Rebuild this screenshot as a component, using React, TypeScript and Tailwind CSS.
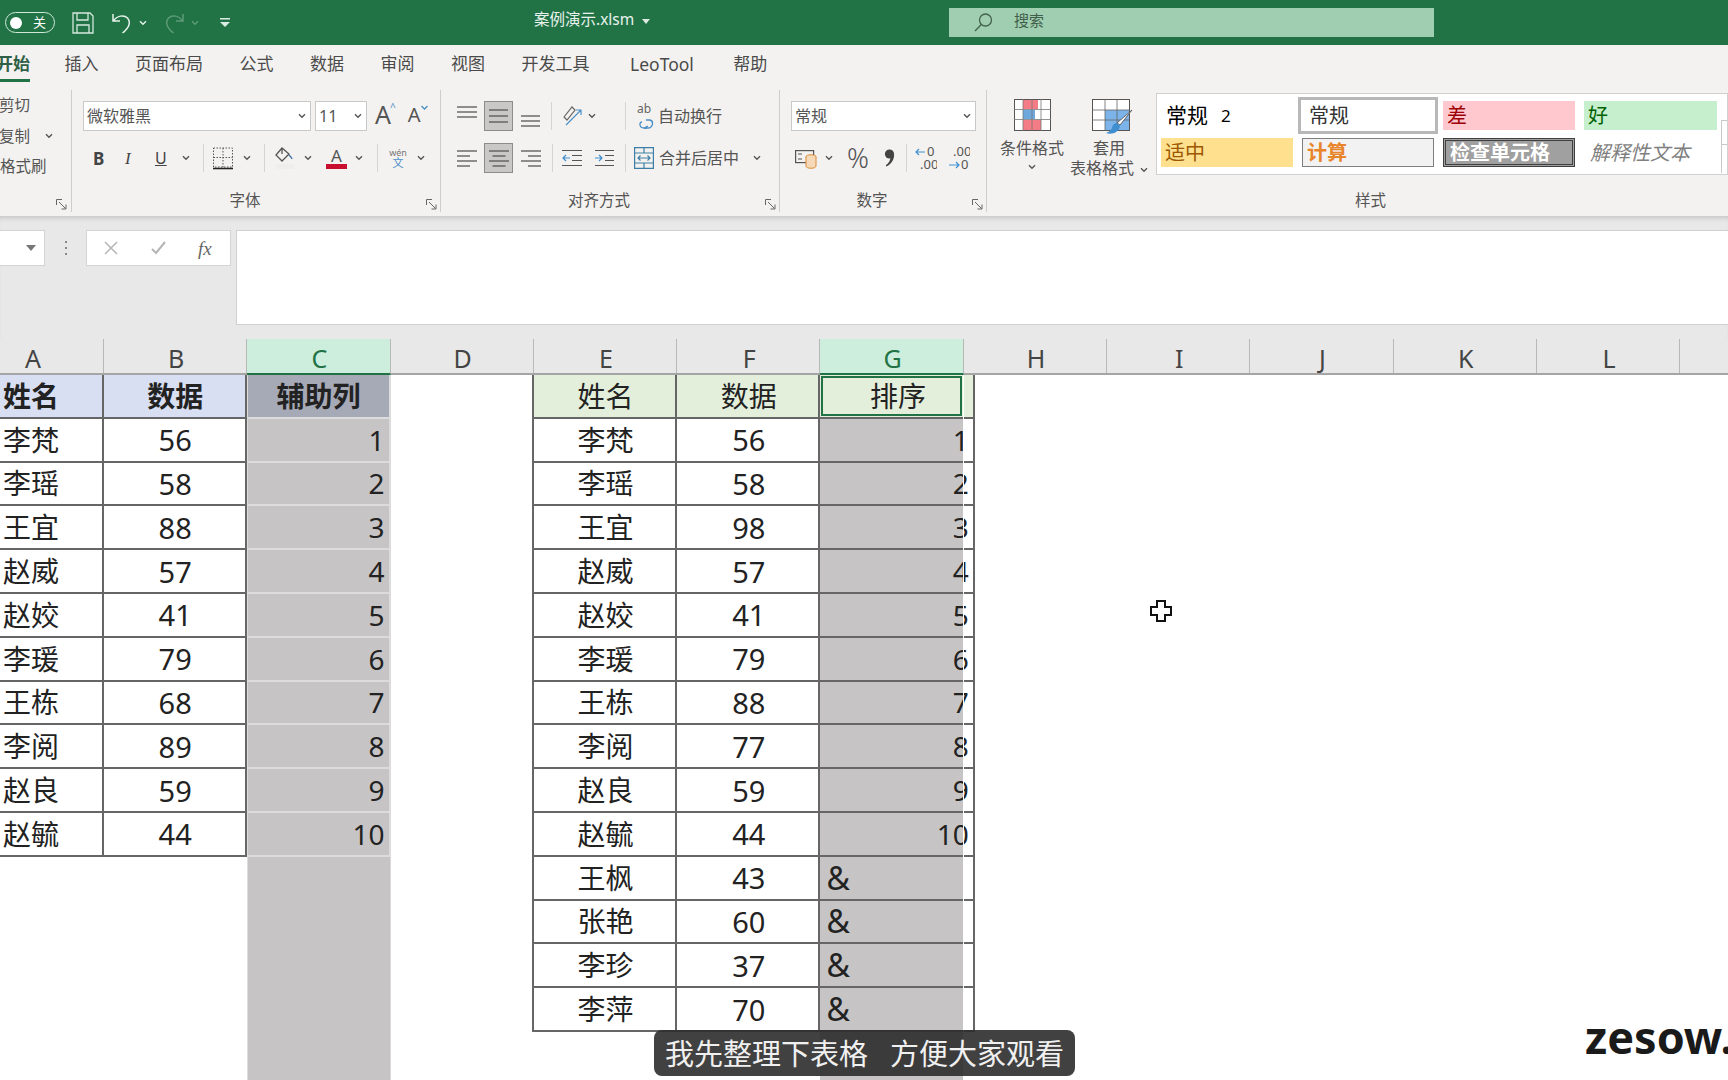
import type { ReactNode } from 'react'

const Chev = ({ className = '' }: { className?: string }) => (
  <svg width="8" height="6" viewBox="0 0 8 6" className={`shrink-0 ${className}`} fill="none" stroke="#555" strokeWidth="1.4">
    <path d="M1 1.2 4 4.2 7 1.2" />
  </svg>
)

const Launcher = () => (
  <svg width="11" height="11" viewBox="0 0 11 11" fill="none" stroke="#666" strokeWidth="1">
    <path d="M.5 6V.5H6M3 3l6.5 6.5M10 5.5V10H5.5" />
  </svg>
)

const Sep = ({ className = '' }: { className?: string }) => <div className={`w-px h-[28px] bg-[#d6d4d2] shrink-0 ${className}`} />

// three or four text lines used by alignment buttons
const Lines = ({ y, w = 20 }: { y: number[]; w?: number }) => (
  <svg width={w} height="24" viewBox={`0 0 ${w} 24`} stroke="#555" strokeWidth="1.3" className="shrink-0">
    {y.map((v, i) => (
      <line key={i} x1="0" x2={w} y1={v} y2={v} />
    ))}
  </svg>
)

const LinesAlign = ({ mode }: { mode: 'l' | 'c' | 'r' }) => {
  const rows = [
    [20, 5],
    [13, 10],
    [20, 15],
    [13, 20],
  ]
  return (
    <svg width="20" height="24" viewBox="0 0 20 24" stroke="#555" strokeWidth="1.3" className="shrink-0">
      {rows.map(([len, y], i) => {
        const x1 = mode === 'l' ? 0 : mode === 'c' ? (20 - len) / 2 : 20 - len
        return <line key={i} x1={x1} x2={x1 + len} y1={y} y2={y} />
      })}
    </svg>
  )
}

const Selected = ({ children, className = '' }: { children: ReactNode; className?: string }) => (
  <div className={`w-[29px] h-[30px] bg-[#c9c8c6] border border-[#8c8c8c] flex items-center justify-center shrink-0 ${className}`}>
    {children}
  </div>
)

function Group({ label, width, children }: { label: string; width: number; children: ReactNode }) {
  return (
    <div className="shrink-0 h-[122px] border-r border-[#cfcdcb] flex flex-col" style={{ width }}>
      <div className="flex-1 pt-[11px] flex flex-col gap-[12px]">{children}</div>
      <div className="h-[22px] pr-[22px] grid grid-cols-[1fr_auto_1fr] items-center text-[15.5px] text-[#555] leading-none">
        <span />
        <span className="whitespace-nowrap">{label}</span>
        <span className="justify-self-end -mr-[19px] mt-[6px] flex">
          <Launcher />
        </span>
      </div>
    </div>
  )
}

const Row = ({ children }: { children: ReactNode }) => <div className="h-[30px] flex items-center">{children}</div>

const tabs = ['插入', '页面布局', '公式', '数据', '审阅', '视图', '开发工具']

function TitleBar() {
  return (
    <div className="h-[45px] bg-[#217346] flex items-center">
      <div className="ml-[5px] w-[50px] h-[21px] rounded-full border border-[#cfe8d8] flex items-center justify-between pl-[4px] pr-[8px] shrink-0">
        <div className="w-[12px] h-[12px] rounded-full bg-white" />
        <span className="text-[13px] leading-none text-white">关</span>
      </div>
      <svg width="22" height="22" viewBox="0 0 22 22" fill="none" stroke="#d5e8dc" strokeWidth="1.3" className="ml-[17px] shrink-0">
        <path d="M1 1h17l3 3v17H1zM5 1v7h11V1M5 21v-8h12v8" />
      </svg>
      <svg width="19" height="22" viewBox="0 0 19 22" fill="none" stroke="#e6f2ea" strokeWidth="1.5" className="ml-[18px] shrink-0">
        <path d="M1 2v7h7M1.5 9C5 3.5 12 2.5 15.5 6c3.5 4 2 9.5-5 15" />
      </svg>
      <Chev className="ml-[8px] [&>path]:stroke-[#e6f2ea]" />
      <svg width="19" height="22" viewBox="0 0 19 22" fill="none" stroke="#5c9a77" strokeWidth="1.5" className="ml-[18px] shrink-0">
        <path d="M18 2v7h-7M17.5 9C14 3.5 7 2.5 3.5 6c-3.5 4-2 9.5 5 15" />
      </svg>
      <Chev className="ml-[7px] [&>path]:stroke-[#5c9a77]" />
      <svg width="10" height="10" viewBox="0 0 10 10" fill="#dcebe2" className="ml-[21px] shrink-0">
        <rect x="0" y="0" width="10" height="1.5" />
        <path d="M0 4h10L5 9z" />
      </svg>
      <div className="ml-[304px] w-[415px] flex items-center shrink-0 mb-[5px]">
        <span className="text-[15.5px] leading-none text-[#e8f2ec]">案例演示.xlsm</span>
        <svg width="8" height="5" viewBox="0 0 8 5" fill="#dcebe2" className="ml-[8px] mt-[2px]">
          <path d="M0 0h8L4 5z" />
        </svg>
      </div>
      <div className="w-[485px] h-[29px] mb-[1px] bg-[#9fcfb0] flex items-center pl-[25px] shrink-0">
        <svg width="19" height="19" viewBox="0 0 19 19" fill="none" stroke="#44624f" strokeWidth="1.3">
          <circle cx="11.5" cy="7" r="6" />
          <path d="M7.3 11.5 1 18" />
        </svg>
        <span className="ml-[21px] text-[15px] leading-none mb-[3px] text-[#3f5d4b]">搜索</span>
      </div>
    </div>
  )
}

function Tabs() {
  return (
    <div className="h-[45px] flex items-start pt-[9px] gap-[36.5px] text-[17px] leading-[20px] text-[#4a4a4a] overflow-hidden">
      <div className="-ml-[4px] -mr-[2px] flex flex-col shrink-0">
        <span className="font-semibold text-[#2f5f46]">开始</span>
        <div className="mt-[5px] h-[3px] bg-[#217346]" />
      </div>
      {tabs.map(t => (
        <span key={t} className="shrink-0">
          {t}
        </span>
      ))}
      <span className="ml-[4px] shrink-0 text-[17.5px]">LeoTool</span>
      <span className="ml-[3px] shrink-0">帮助</span>
    </div>
  )
}

function Clipboard() {
  return (
    <div className="w-[72px] h-[122px] shrink-0 border-r border-[#cfcdcb] flex flex-col text-[15.5px] text-[#555] leading-none">
      <div className="pt-[8px] flex flex-col gap-[15px] flex-1">
        <span className="-ml-[1px]">剪切</span>
        <span className="-ml-[1px] flex items-center">
          复制
          <Chev className="ml-[15px]" />
        </span>
        <span>格式刷</span>
      </div>
      <div className="h-[22px] flex justify-end items-center pr-[4px] pt-[6px]">
        <Launcher />
      </div>
    </div>
  )
}

function FontGroup() {
  return (
    <Group label="字体" width={369}>
      <Row>
        <div className="ml-[11px] w-[228px] h-[30px] bg-white border border-[#c9c9c9] flex items-center justify-between pl-[3px] pr-[4px] text-[16px] text-[#555]">
          <span>微软雅黑</span>
          <Chev />
        </div>
        <div className="ml-[4px] w-[52px] h-[30px] bg-white border border-[#c9c9c9] flex items-center justify-between pl-[3px] pr-[4px] text-[16px] text-[#555]">
          <span>11</span>
          <Chev />
        </div>
        <span className="ml-[8px] -mt-[3px] text-[25px] leading-none text-[#555] flex items-start">
          A<span className="text-[10px] -ml-[1px] text-[#4a8fc0] leading-none">^</span>
        </span>
        <span className="ml-[12px] -mt-[2px] text-[20px] leading-none text-[#555] flex items-start">
          A
          <svg width="7" height="5" viewBox="0 0 7 5" fill="none" stroke="#4a8fc0" strokeWidth="1.3">
            <path d="M.5 1 3.5 4 6.5 1" />
          </svg>
        </span>
      </Row>
      <Row>
        <span className="ml-[21px] w-[12px] text-[17px] font-bold text-[#444] leading-none">B</span>
        <span className="ml-[20px] w-[9px] text-[17px] italic text-[#444] leading-none [font-family:'Liberation_Serif',serif]">I</span>
        <span className="ml-[21px] w-[14px] text-[16px] text-[#444] underline leading-none">U</span>
        <Chev className="ml-[13px]" />
        <Sep className="ml-[13px]" />
        <svg width="20" height="23" viewBox="0 0 20 23" fill="none" stroke="#555" className="ml-[9px] shrink-0">
          <path d="M.5 1h19v19H.5zM10 1v19M.5 10.5h19" strokeDasharray="1.5 1.5" />
          <path d="M0 21.5h20" strokeWidth="1.6" stroke="#222" />
        </svg>
        <Chev className="ml-[10px]" />
        <Sep className="ml-[13px]" />
        <svg width="20" height="24" viewBox="0 0 20 24" fill="none" stroke="#555" strokeWidth="1.3" className="ml-[10px] shrink-0">
          <path d="M7 2 1 9l6 6 7-7zM7 2v6" />
          <path d="M14 9c2 2 3 3 3 4" stroke="#3a6ea5" />
          <rect x="1" y="18" width="18" height="5" fill="#f0eeec" stroke="none" />
        </svg>
        <Chev className="ml-[9px]" />
        <div className="ml-[14px] w-[21px] flex flex-col items-center shrink-0">
          <span className="text-[17px] leading-[17px] text-[#555]">A</span>
          <div className="w-[21px] h-[5px] bg-[#c8102e]" />
        </div>
        <Chev className="ml-[8px]" />
        <Sep className="ml-[14px]" />
        <div className="ml-[10px] w-[20px] flex flex-col items-center shrink-0 leading-none">
          <span className="text-[9px] text-[#777]">wén</span>
          <span className="text-[11px] text-[#4a90c8]">文</span>
        </div>
        <Chev className="ml-[9px]" />
      </Row>
    </Group>
  )
}

function AlignGroup() {
  return (
    <Group label="对齐方式" width={339}>
      <Row>
        <div className="ml-[16px]">
          <Lines y={[3, 8, 13]} />
        </div>
        <Selected className="ml-[7px]">
          <Lines y={[6, 12, 18]} w={19} />
        </Selected>
        <div className="ml-[8px]">
          <Lines y={[12, 17, 22]} w={19} />
        </div>
        <Sep className="ml-[11px]" />
        <svg width="23" height="24" viewBox="0 0 23 24" fill="none" stroke="#666" strokeWidth="1.2" className="ml-[10px] shrink-0">
          <path d="M2 13 10 3l3 3-8 10z" />
          <path d="M4 21 19 6M14 6h5v5" stroke="#4a90c8" />
        </svg>
        <Chev className="ml-[3px]" />
        <Sep className="ml-[29px]" />
        <div className="ml-[11px] w-[18px] h-[26px] relative shrink-0">
          <span className="absolute left-0 top-0 text-[12px] leading-none text-[#666]">ab</span>
          <svg width="18" height="14" viewBox="0 0 18 14" fill="none" stroke="#4a90c8" strokeWidth="1.3" className="absolute left-0 bottom-0">
            <path d="M5 7C2 7 2 13 7 13h4c5 0 6-7 2-8H9M11 11 7 13l3 2" />
          </svg>
        </div>
        <span className="ml-[3px] text-[16px] text-[#555] leading-none">自动换行</span>
      </Row>
      <Row>
        <div className="ml-[16px]">
          <LinesAlign mode="l" />
        </div>
        <Selected className="ml-[7px]">
          <LinesAlign mode="c" />
        </Selected>
        <div className="ml-[8px]">
          <LinesAlign mode="r" />
        </div>
        <Sep className="ml-[11px]" />
        <svg width="20" height="18" viewBox="0 0 20 18" fill="none" stroke="#555" strokeWidth="1.2" className="ml-[9px] shrink-0">
          <path d="M0 1.5h20M10 6.5h10M10 11.5h10M0 16.5h20" />
          <path d="M8 9H1M4 6 1 9l3 3" stroke="#3f8fd0" />
        </svg>
        <svg width="19" height="18" viewBox="0 0 19 18" fill="none" stroke="#555" strokeWidth="1.2" className="ml-[13px] shrink-0">
          <path d="M0 1.5h19M10 6.5h9M10 11.5h9M0 16.5h19" />
          <path d="M0 9h7M4 6l3 3-3 3" stroke="#3f8fd0" />
        </svg>
        <Sep className="ml-[11px]" />
        <svg width="20" height="22" viewBox="0 0 20 22" fill="none" stroke="#3d7ea6" strokeWidth="1.2" className="ml-[8px] shrink-0">
          <path d="M.6.6h18.8v20.8H.6zM.6 6h18.8M.6 16h18.8M10 .6V6M10 16v5.4" />
          <path d="M4 11h12M6.5 8.5 4 11l2.5 2.5M13.5 8.5 16 11l-2.5 2.5" />
        </svg>
        <span className="ml-[5px] text-[16px] text-[#555] leading-none w-[80px] whitespace-nowrap">合并后居中</span>
        <Chev className="ml-[14px]" />
      </Row>
    </Group>
  )
}

function DecIcon({ arrowLeft }: { arrowLeft: boolean }) {
  return (
    <svg width="22" height="26" viewBox="0 0 22 26" className="shrink-0">
      {arrowLeft ? (
        <>
          <text x="12" y="11" fontSize="13" fill="#555">0</text>
          <text x="5" y="24" fontSize="13" fill="#555">.00</text>
          <path d="M10 7H1M4 4 1 7l3 3" fill="none" stroke="#3f8fd0" strokeWidth="1.2" />
        </>
      ) : (
        <>
          <text x="5" y="11" fontSize="13" fill="#555">.00</text>
          <text x="13" y="24" fontSize="13" fill="#555">0</text>
          <path d="M1 20h10M8 17l3 3-3 3" fill="none" stroke="#3f8fd0" strokeWidth="1.2" />
        </>
      )}
    </svg>
  )
}

function NumberGroup() {
  return (
    <Group label="数字" width={207}>
      <Row>
        <div className="ml-[11px] w-[185px] h-[30px] bg-white border border-[#c9c9c9] flex items-center justify-between pl-[3px] pr-[4px] text-[16px] text-[#555]">
          <span>常规</span>
          <Chev />
        </div>
      </Row>
      <Row>
        <svg width="22" height="24" viewBox="0 0 22 24" fill="none" className="ml-[15px] shrink-0">
          <rect x=".6" y="4.6" width="18" height="12" stroke="#555" strokeWidth="1.2" />
          <path d="M3 8h4M3 13h4" stroke="#555" />
          <ellipse cx="16" cy="11" rx="5" ry="2.2" fill="#f6d9b8" stroke="#d98a36" />
          <path d="M11 11v9c0 3 10 3 10 0v-9" fill="#f6d9b8" stroke="#d98a36" />
        </svg>
        <Chev className="ml-[8px]" />
        <span className="ml-[14px] w-[22px] -mt-[2px] text-[27px] font-light leading-none text-[#555]">%</span>
        <svg width="11" height="18" viewBox="0 0 11 18" fill="#444" className="ml-[15px] shrink-0">
          <circle cx="5.5" cy="5" r="4.6" />
          <path d="M10 5c.6 5-2.500 10-7.500 12.500l-.7-1.200C5 14 6.500 11 6.500 8z" />
        </svg>
        <Sep className="ml-[11px]" />
        <div className="ml-[8px]">
          <DecIcon arrowLeft />
        </div>
        <div className="ml-[11px]">
          <DecIcon arrowLeft={false} />
        </div>
      </Row>
    </Group>
  )
}

function CondIcon() {
  return (
    <svg width="37" height="32" viewBox="0 0 37 32" className="shrink-0">
      <rect x=".5" y=".5" width="36" height="31" fill="#fff" stroke="#555" />
      <rect x="9" y="1" width="15" height="9" fill="#f47c86" />
      <rect x="9" y="11" width="12" height="9" fill="#6fa8dc" />
      <rect x="9" y="21" width="18" height="10" fill="#f47c86" />
      <path d="M9 0v32M18 0v32M27 0v32M0 10.5h37M0 20.5h37" stroke="#777" strokeWidth=".8" />
    </svg>
  )
}

function TableIcon() {
  return (
    <svg width="41" height="38" viewBox="0 0 41 38" className="shrink-0">
      <rect x=".5" y=".5" width="37" height="31" fill="#fff" stroke="#555" />
      <rect x="13" y="11" width="24" height="20" fill="#7cb4ea" />
      <path d="M13 0v32M25 0v32M0 11h37M0 21h37" stroke="#666" strokeWidth=".8" />
      <path d="M40 11 28 26l-3-2z" fill="#fff" stroke="#555" strokeWidth=".9" />
      <path d="M25 24c-3 0-5 3-5 5-1 3-6 5-6 5 5 2 13 0 14-7z" fill="#3f8fd0" />
    </svg>
  )
}

function Gallery() {
  const cell = 'h-[29px] flex items-center pl-[4px] leading-none text-[20px]'
  return (
    <div className="mt-[3px] ml-[22px] h-[82px] flex-1 flex bg-white border border-[#d2d0ce]">
      <div className="pl-[4px] pt-[7px] grid grid-cols-[132px_132px_132px_133px] gap-x-[9px] gap-y-[8px] content-start shrink-0 w-[564px]">
        <div className={`${cell} pl-[5px] text-[21px] text-black`}>
          常规<span className="ml-[13px] text-[17px]">2</span>
        </div>
        <div className={`${cell} bg-white text-[#333] pl-[7px] shadow-[0_0_0_1px_#fff,0_0_0_4px_#b8b8b8]`}>常规</div>
        <div className={`${cell} bg-[#ffc7ce] text-[#9c0006]`}>差</div>
        <div className={`${cell} bg-[#c6efce] text-[#006100]`}>好</div>
        <div className={`${cell} bg-[#fee08e] text-[#9c5700]`}>适中</div>
        <div className={`${cell} bg-[#f2f2f2] border border-[#7f7f7f] text-[#e8842a] font-bold`}>计算</div>
        <div className={`${cell} bg-[#a0a0a0] border-[3px] border-double border-[#3f3f3f] text-white font-bold pl-[2px]`}>检查单元格</div>
        <div className={`${cell} italic text-[#7f7f7f] pl-[6px]`}>解释性文本</div>
      </div>
      <div className="flex-1 flex flex-col pt-[26px]">
        <div className="h-[25px] border-l border-y border-[#c9c9c9]" />
        <div className="h-[28px] border-l border-[#c9c9c9]" />
      </div>
    </div>
  )
}

function StylesGroup() {
  return (
    <div className="flex-1 h-[122px] flex flex-col">
      <div className="h-[100px] flex">
        <div className="ml-[13px] w-[64px] pt-[9px] flex flex-col items-center text-[16px] leading-[20px] text-[#555] shrink-0">
          <CondIcon />
          <span className="mt-[7px] whitespace-nowrap">条件格式</span>
          <Chev className="mt-[6px]" />
        </div>
        <div className="ml-[6px] w-[64px] pt-[9px] flex flex-col items-center text-[16px] leading-[20px] text-[#555] shrink-0 relative">
          <div className="h-[32px] ml-[20px] w-[41px]">
            <TableIcon />
          </div>
          <span className="mt-[7px] ml-[14px]">套用</span>
          <span className="whitespace-nowrap">表格格式</span>
          <Chev className="absolute left-[70px] top-[77px]" />
        </div>
        <Gallery />
      </div>
      <div className="h-[22px] pl-[368px] flex items-center text-[15.5px] text-[#555] leading-none">样式</div>
    </div>
  )
}

function FormulaBar() {
  return (
    <div className="h-[123px] bg-[#e9e8e8] flex items-start pt-[14px] shadow-[inset_0_5px_5px_-3px_rgba(0,0,0,0.15)]">
      <div className="w-[45px] h-[36px] bg-white border border-[#d4d4d4] border-l-0 flex items-center justify-end pr-[8px] shrink-0">
        <svg width="10" height="6" viewBox="0 0 10 6" fill="#777">
          <path d="M0 0h10L5 6z" />
        </svg>
      </div>
      <div className="ml-[20px] h-[36px] flex flex-col items-center justify-center gap-[4px] shrink-0">
        <div className="w-[2px] h-[2px] bg-[#888]" />
        <div className="w-[2px] h-[2px] bg-[#888]" />
        <div className="w-[2px] h-[2px] bg-[#888]" />
      </div>
      <div className="ml-[19px] w-[145px] h-[36px] bg-white border border-[#d4d4d4] flex items-center pl-[17px] shrink-0">
        <svg width="14" height="14" viewBox="0 0 14 14" stroke="#b5b5b5" strokeWidth="1.5">
          <path d="M1 1l12 12M13 1 1 13" />
        </svg>
        <svg width="16" height="14" viewBox="0 0 16 14" fill="none" stroke="#b5b5b5" strokeWidth="2" className="ml-[33px]">
          <path d="M1 8l4 4 9-11" />
        </svg>
        <span className="ml-[31px] text-[19px] leading-none italic text-[#666] [font-family:'Liberation_Serif',serif]">fx</span>
      </div>
      <div className="ml-[5px] flex-1 h-[95px] bg-white border border-[#d0d0d0] border-r-0" />
    </div>
  )
}

const colLetters = ['B', 'C', 'D', 'E', 'F', 'G', 'H', 'I', 'J', 'K', 'L']

function ColumnHeader() {
  return (
    <div className="h-[36px] bg-[#e9e8e8] flex border-b-2 border-[#a5a5a5] text-[25px] text-[#444] leading-none relative">
      <div className="w-[104px] shrink-0 border-r border-[#b8b8b8] pl-[25px] pt-[7px]">A</div>
      {colLetters.map(l => {
        const on = l === 'C' || l === 'G'
        return (
          <div
            key={l}
            className={`w-[143.3px] shrink-0 text-center pl-[2px] pt-[7px] border-r border-[#b8b8b8] ${
              on ? 'bg-[#cdeedd] text-[#217346] border-b-2 border-b-[#217346] h-[36px]' : ''
            }`}
          >
            {l}
          </div>
        )
      })}
    </div>
  )
}

const left = [
  ['李梵', '56'],
  ['李瑶', '58'],
  ['王宜', '88'],
  ['赵威', '57'],
  ['赵姣', '41'],
  ['李瑗', '79'],
  ['王栋', '68'],
  ['李阅', '89'],
  ['赵良', '59'],
  ['赵毓', '44'],
]

const right = [
  ['李梵', '56'],
  ['李瑶', '58'],
  ['王宜', '98'],
  ['赵威', '57'],
  ['赵姣', '41'],
  ['李瑗', '79'],
  ['王栋', '88'],
  ['李阅', '77'],
  ['赵良', '59'],
  ['赵毓', '44'],
  ['王枫', '43'],
  ['张艳', '60'],
  ['李珍', '37'],
  ['李萍', '70'],
]

const line = 'border-r-2 border-b-2 border-[#666]'

function Sheet() {
  const rows = Array.from({ length: 17 }, (_, i) => i)
  return (
    <div className="relative flex-1 overflow-hidden bg-white grid grid-cols-[104px_repeat(6,143.3px)_11px_1fr] auto-rows-[43.8px] text-[28px] text-[#222] leading-none">
      {rows.map(i => {
        const l = i >= 1 && i <= 10 ? left[i - 1] : null
        const r = i >= 1 && i <= 14 ? right[i - 1] : null
        const inLeft = i <= 10
        const inRight = i <= 14
        const gBg = 'bg-[linear-gradient(to_right,#c6c4c5_143px,#fff_143px)]'
        return [
          <div key={`a${i}`} className={`flex items-center pl-[3px] ${inLeft ? line : ''} ${i === 0 ? 'bg-[#d8dff3] font-bold' : ''}`}>
            {i === 0 ? '姓名' : l?.[0]}
          </div>,
          <div key={`b${i}`} className={`flex items-center justify-center pl-[1px] ${inLeft ? line : ''} ${i === 0 ? 'bg-[#d8dff3] font-bold' : 'text-[29px]'}`}>
            {i === 0 ? '数据' : l?.[1]}
          </div>,
          <div
            key={`c${i}`}
            className={`flex items-center border-l border-[#dcdcdc] ${inLeft ? line : 'border-r border-r-[#d8d8d8]'} ${
              i === 0 ? 'bg-[#a6a9b6] font-bold justify-center' : 'bg-[#c6c4c5] justify-end pr-[4px]'
            }`}
          >
            {i === 0 ? '辅助列' : inLeft ? i : ''}
          </div>,
          <div key={`d${i}`} className={inRight ? 'border-r-2 border-[#666]' : ''} />,
          <div key={`e${i}`} className={`flex items-center justify-center pl-[2px] ${inRight ? line : ''} ${i === 0 ? 'bg-[#e4efdb]' : ''}`}>
            {i === 0 ? '姓名' : r?.[0]}
          </div>,
          <div key={`f${i}`} className={`flex items-center justify-center pl-[2px] ${inRight ? line : ''} ${i === 0 ? 'bg-[#e4efdb]' : 'text-[29px]'}`}>
            {i === 0 ? '数据' : r?.[1]}
          </div>,
          i === 0 ? (
            <div key="g0" className={`col-span-2 ${line} bg-[#e4efdb] p-[1px]`}>
              <div className="w-[141px] h-full border-2 border-[#217346] flex items-center justify-center relative">
                <span className="ml-[12px]">排序</span>
              </div>
            </div>
          ) : inRight ? (
            <div key={`g${i}`} className={`col-span-2 flex items-center ${line} ${gBg} ${i <= 10 ? 'justify-end pr-[4px]' : 'pl-[6px] text-[32px]'}`}>
              {i <= 10 ? i : '&'}
            </div>
          ) : (
            <div key={`g${i}`} className="bg-[#c6c4c5]" />
          ),
          ...(i === 0 || inRight ? [] : [<div key={`g2${i}`} />]),
          <div key={`r${i}`} />,
        ]
      })}
      {/* selection edge runs over the numbers */}
      <div className="absolute left-[963px] top-0 bottom-0 w-px bg-white" />
    </div>
  )
}

export default function App() {
  return (
    <div className="w-[1728px] h-[1080px] relative overflow-hidden flex flex-col bg-white [font-family:'Noto_Sans','Noto_Sans_CJK_SC',sans-serif]">
      <TitleBar />
      <div className="bg-[#f4f2f0] h-[171px] shrink-0 flex flex-col">
        <Tabs />
        <div className="flex">
          <Clipboard />
          <FontGroup />
          <AlignGroup />
          <NumberGroup />
          <StylesGroup />
        </div>
      </div>
      <FormulaBar />
      <ColumnHeader />
      <Sheet />

      <svg width="22" height="22" viewBox="0 0 22 22" className="absolute left-[1150px] top-[600px]" fill="#fff" stroke="#111" strokeWidth="2">
        <path d="M7 1h8v6h6v8h-6v6H7v-6H1V7h6z" />
      </svg>

      <div className="absolute left-[654px] top-[1030px] w-[421px] h-[46px] rounded-lg bg-[#2c2c2c]/90 flex items-center justify-center gap-[22px] text-[29px] leading-none text-[#f0f0f0]">
        <span>我先整理下表格</span>
        <span>方便大家观看</span>
      </div>

      <div className="absolute left-[1585px] top-[1007px] text-[45px] font-bold leading-[60px] text-[#1a1a1a] [font-family:'Noto_Sans',sans-serif]">
        zesow.
      </div>
    </div>
  )
}
